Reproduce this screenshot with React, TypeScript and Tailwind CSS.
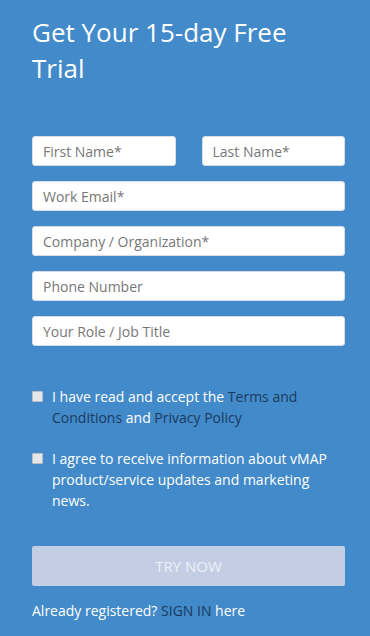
export default function App() {
  const font = { fontFamily: '"Open Sans", "Noto Sans", sans-serif' };
  const inputCls =
    "h-[30px] w-full rounded-[3px] bg-white px-[10px] text-[14px] text-[#555] placeholder:text-[#777] outline-none border border-[#d6dde6]";

  return (
    <div className="min-h-[636px] w-[370px] bg-[#428ac9] pl-[32px] pr-[25px] pt-[14px]" style={font}>
      <h1 className="text-[26px] leading-[36px] text-white font-normal">Get Your 15-day Free Trial</h1>

      <form className="mt-[50px]" onSubmit={(e) => e.preventDefault()}>
        <div className="flex flex-col gap-[15px]">
          <div className="flex gap-[26px]">
            <input className={inputCls} placeholder="First Name*" />
            <input className={inputCls} placeholder="Last Name*" />
          </div>
          <input className={inputCls} placeholder="Work Email*" />
          <input className={inputCls} placeholder="Company / Organization*" />
          <input className={inputCls} placeholder="Phone Number" />
          <input className={inputCls} placeholder="Your Role / Job Title" />
        </div>

        <label className="mt-[40px] flex items-start gap-[9px] text-[14px] leading-[21px] text-white">
          <span className="mt-[5px] h-[11px] w-[11px] shrink-0 rounded-[1px] border border-[#b9bec6] bg-[#e4e6ea]" />
          <span>
            I have read and accept the <a className="text-[#1b3a5e]">Terms and Conditions</a> and{" "}
            <a className="text-[#1b3a5e]">Privacy Policy</a>
          </span>
        </label>

        <label className="mt-[20px] flex items-start gap-[9px] text-[14px] leading-[21px] text-white">
          <span className="mt-[5px] h-[11px] w-[11px] shrink-0 rounded-[1px] border border-[#b9bec6] bg-[#e4e6ea]" />
          <span>I agree to receive information about vMAP product/service updates and marketing news.</span>
        </label>

        <button
          type="submit"
          className="mt-[35px] h-[40px] w-full rounded-[2px] bg-[#c3cee4] text-[15px] text-[#eef1f8]"
        >
          TRY NOW
        </button>

        <p className="mt-[14px] text-[14px] leading-[21px] text-white">
          Already registered? <a className="text-[#1b3a5e]">SIGN IN</a> here
        </p>
      </form>
    </div>
  );
}
